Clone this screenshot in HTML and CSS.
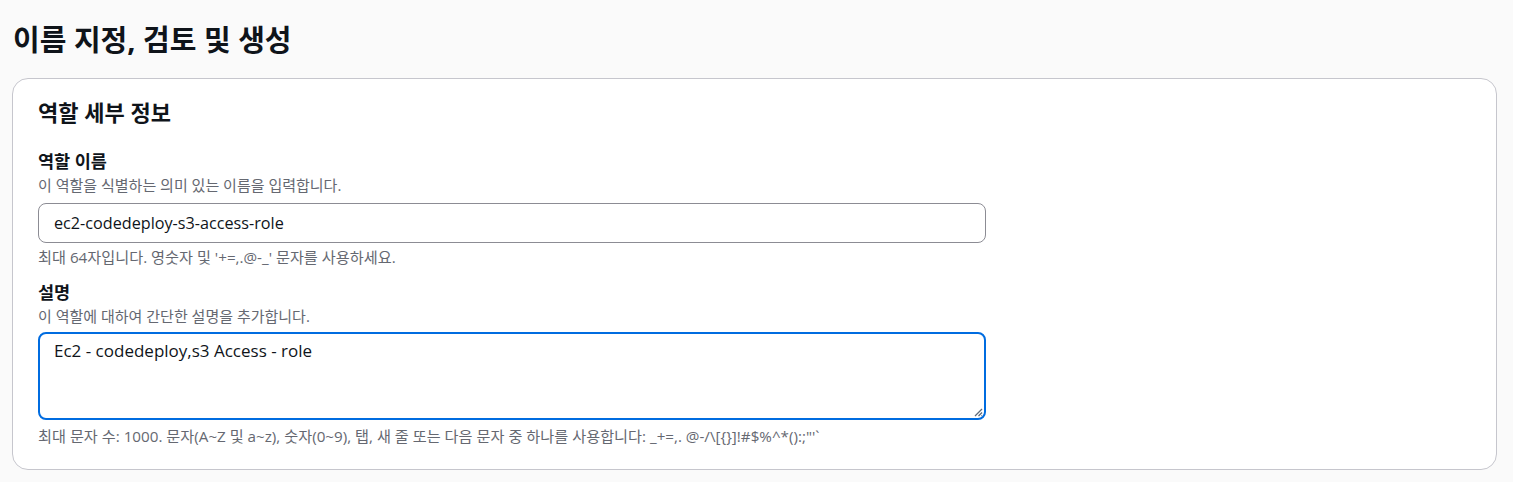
FILE: index.html
```html
<!DOCTYPE html>
<html lang="ko">
<head>
<meta charset="utf-8">
<link rel="stylesheet" href="styles.css">
</head>
<body>
<div class="page">
  <h1 class="page-title">이름 지정, 검토 및 생성</h1>
  <section class="card">
    <h2 class="card-title">역할 세부 정보</h2>
    <div class="field">
      <div class="label">역할 이름</div>
      <div class="desc">이 역할을 식별하는 의미 있는 이름을 입력합니다.</div>
      <div class="input">ec2-codedeploy-s3-access-role</div>
      <div class="hint">최대 64자입니다. 영숫자 및 '+=,.@-_' 문자를 사용하세요.</div>
    </div>
    <div class="field">
      <div class="label">설명</div>
      <div class="desc">이 역할에 대하여 간단한 설명을 추가합니다.</div>
      <div class="textarea">Ec2 - codedeploy,s3 Access - role
        <svg class="grip" width="10" height="10" viewBox="0 0 10 10"><path d="M9 2 L2 9 M9 5.5 L5.5 9 M9 8.5 L8.5 9" stroke="#5f6b7a" stroke-width="1.3" fill="none"/></svg>
      </div>
      <div class="hint hint-last">최대 문자 수: 1000. 문자(A~Z 및 a~z), 숫자(0~9), 탭, 새 줄 또는 다음 문자 중 하나를 사용합니다: _+=,. @-/\[{}]!#$%^*():;"'`</div>
    </div>
  </section>
</div>
</body>
</html>
```
FILE: styles.css
```css
html, body {
  margin: 0;
  padding: 0;
  background: #fafafa;
}
body {
  font-family: "Open Sans", "Noto Sans CJK KR", sans-serif;
  color: #0f141a;
}
.page {
  padding: 19px 16px 0 12px;
}
.page-title {
  margin: 0 0 17px 1px;
  font-size: 29px;
  line-height: 42px;
  font-weight: 700;
}
.card {
  background: #ffffff;
  border: 1px solid #c6c6cd;
  border-radius: 16px;
  padding: 18px 25px 22px 25px;
}
.card-title {
  margin: 0 0 22px 0;
  font-size: 22px;
  line-height: 30px;
  font-weight: 700;
}
.field {
  width: 948px;
  margin-bottom: 12px;
}
.field:last-child { margin-bottom: 0; }
.label {
  font-size: 17.5px;
  font-weight: 700;
  line-height: 25px;
}
.desc {
  font-size: 15px;
  line-height: 22px;
  color: #656871;
  margin-bottom: 7px;
}
.field + .field .desc { margin-bottom: 5px; }
.input {
  box-sizing: border-box;
  height: 40px;
  border: 1px solid #8c8c94;
  border-radius: 8px;
  padding: 0 15px;
  font-size: 16.2px;
  line-height: 38px;
}
.textarea {
  box-sizing: border-box;
  position: relative;
  height: 88px;
  border: 2px solid #006ce0;
  border-radius: 8px;
  padding: 5px 14px;
  font-size: 17px;
  line-height: 24px;
}
.grip {
  position: absolute;
  right: 1px;
  bottom: 1px;
}
.hint {
  font-size: 15.2px;
  line-height: 22px;
  color: #656871;
  margin-top: 3px;
}
.hint-last { margin-top: 5px; }
```
